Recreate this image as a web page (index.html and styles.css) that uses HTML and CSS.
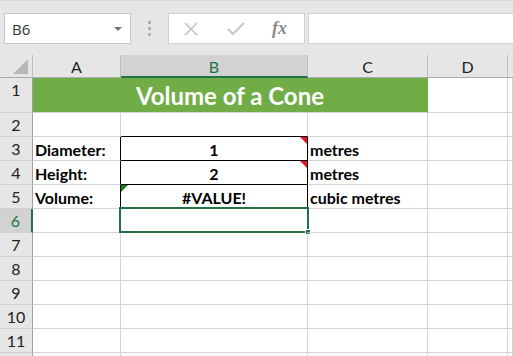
FILE: index.html
```html
<!DOCTYPE html>
<html lang="en">
<head>
    <meta charset="UTF-8">
    <title>Volume of a Cone</title>
    <link rel="stylesheet" href="styles.css">
</head>
<body>

    <!-- Formula bar -->
    <div class="toolbar">
        <div class="name-box">
            <span>B6</span>
            <span class="drop"></span>
        </div>
        <div class="dots"><i></i><i></i><i></i></div>
        <div class="fx-box">
            <svg width="14" height="14" viewBox="0 0 14 14"><path d="M1 1 L13 13 M13 1 L1 13" stroke="#c3c3c3" stroke-width="1.6" fill="none"/></svg>
            <svg width="18" height="14" viewBox="0 0 18 14"><path d="M1 7 L6 12 L17 1" stroke="#c3c3c3" stroke-width="1.8" fill="none"/></svg>
            <span class="fx">fx</span>
        </div>
        <div class="formula"></div>
    </div>

    <!-- Sheet -->
    <div class="sheet">
        <div class="corner"><span class="corner-tri"></span></div>
        <div class="col-head">A</div>
        <div class="col-head active">B</div>
        <div class="col-head">C</div>
        <div class="col-head">D</div>
        <div class="col-head last"></div>

        <div class="row-head">1</div>
        <div class="cell title">Volume of a Cone</div>
        <div class="cell"></div>
        <div class="cell"></div>

        <div class="row-head">2</div>
        <div class="cell"></div>
        <div class="cell above-box"></div>
        <div class="cell"></div>
        <div class="cell"></div>
        <div class="cell"></div>

        <div class="row-head">3</div>
        <div class="cell label left-of-box">Diameter:</div>
        <div class="cell boxed num">1<span class="flag-red"></span></div>
        <div class="cell label">metres</div>
        <div class="cell"></div>
        <div class="cell"></div>

        <div class="row-head">4</div>
        <div class="cell label left-of-box">Height:</div>
        <div class="cell boxed num">2<span class="flag-red"></span></div>
        <div class="cell label">metres</div>
        <div class="cell"></div>
        <div class="cell"></div>

        <div class="row-head">5</div>
        <div class="cell label left-of-box">Volume:</div>
        <div class="cell boxed num">#VALUE!<span class="flag-green"></span></div>
        <div class="cell label">cubic metres</div>
        <div class="cell"></div>
        <div class="cell"></div>

        <div class="row-head active">6</div>
        <div class="cell"></div>
        <div class="cell selected"><span class="sel"><span class="handle"></span></span></div>
        <div class="cell"></div>
        <div class="cell"></div>
        <div class="cell"></div>

        <div class="row-head">7</div>
        <div class="cell"></div><div class="cell"></div><div class="cell"></div><div class="cell"></div><div class="cell"></div>
        <div class="row-head">8</div>
        <div class="cell"></div><div class="cell"></div><div class="cell"></div><div class="cell"></div><div class="cell"></div>
        <div class="row-head">9</div>
        <div class="cell"></div><div class="cell"></div><div class="cell"></div><div class="cell"></div><div class="cell"></div>
        <div class="row-head">10</div>
        <div class="cell"></div><div class="cell"></div><div class="cell"></div><div class="cell"></div><div class="cell"></div>
        <div class="row-head">11</div>
        <div class="cell"></div><div class="cell"></div><div class="cell"></div><div class="cell"></div><div class="cell"></div>
        <div class="row-head"></div>
        <div class="cell"></div><div class="cell"></div><div class="cell"></div><div class="cell"></div><div class="cell"></div>
    </div>

</body>
</html>
```

FILE: styles.css
```css
* {
    box-sizing: border-box;
}
body {
    margin: 0;
    width: 513px;
    height: 356px;
    overflow: hidden;
    background-color: #fff;
    font-family: Lato, "Liberation Sans", sans-serif;
}

/* formula bar */
.toolbar {
    height: 55px;
    background-color: #e6e6e6;
    border-top: 1px solid #d6d6d6;
    display: flex;
    align-items: flex-start;
    padding: 12px 0 0 4px;
}
.name-box {
    width: 127px;
    height: 31px;
    background-color: #fff;
    border: 1px solid #c6c6c6;
    display: flex;
    align-items: center;
    justify-content: space-between;
    padding: 0 8px 0 7px;
    font-family: "Open Sans", sans-serif;
    font-size: 15px;
    color: #333;
}
.drop {
    width: 0;
    height: 0;
    border-left: 4px solid transparent;
    border-right: 4px solid transparent;
    border-top: 4px solid #777;
}
.dots {
    width: 37px;
    height: 31px;
    display: flex;
    flex-direction: column;
    align-items: center;
    justify-content: center;
    gap: 3px;
}
.dots i {
    width: 3px;
    height: 3px;
    background-color: #b3b3b3;
}
.fx-box {
    width: 137px;
    height: 31px;
    background-color: #fff;
    border: 1px solid #d0d0d0;
    display: flex;
    align-items: center;
    padding-left: 15px;
    gap: 29px;
}
.fx {
    font-family: "Liberation Serif", serif;
    font-style: italic;
    font-weight: bold;
    font-size: 18px;
    color: #8a8a8a;
    margin-left: -2px;
}
.formula {
    flex: 1;
    height: 31px;
    margin-left: 3px;
    background-color: #fff;
    border: 1px solid #d0d0d0;
    border-right: none;
}

/* grid */
.sheet {
    display: grid;
    grid-template-columns: 33px 88px 187px 120px 80px 1fr;
    grid-template-rows: 23px 35px repeat(11, 24px);
}
.corner {
    position: relative;
    background-color: #e6e6e6;
    border-right: 1px solid #bdbdbd;
    border-bottom: 1px solid #ababab;
}
.corner-tri {
    position: absolute;
    right: 4px;
    bottom: 3px;
    width: 0;
    height: 0;
    border-left: 15px solid transparent;
    border-bottom: 15px solid #b7b7b7;
}
.col-head {
    background-color: #e6e6e6;
    border-right: 1px solid #bdbdbd;
    border-bottom: 1px solid #ababab;
    text-align: center;
    font-size: 16px;
    line-height: 23px;
    color: #222;
}
.col-head.active {
    background-color: #d2d2d2;
    border-bottom: 2px solid #217346;
    color: #217346;
}
.col-head.last {
    border-right: none;
}
.row-head {
    background-color: #e6e6e6;
    border-right: 1px solid #9f9f9f;
    border-bottom: 1px solid #d0d0d0;
    text-align: center;
    font-size: 16px;
    line-height: 24px;
    color: #222;
}
.row-head.active {
    background-color: #d2d2d2;
    border-right: 2px solid #217346;
    color: #217346;
}
.cell {
    position: relative;
    border-right: 1px solid #d4d4d4;
    border-bottom: 1px solid #d4d4d4;
    font-size: 16px;
    line-height: 25px;
    white-space: nowrap;
}
.title {
    grid-column: 2 / 5;
    background-color: #70ad47;
    color: #fff;
    font-weight: bold;
    font-size: 24px;
    line-height: 35px;
    text-align: center;
    border-right: 1px solid #70ad47;
    border-bottom: 1px solid #d4d4d4;
}
.label {
    font-weight: bold;
    padding-left: 2px;
    color: #000;
}
.num {
    font-weight: bold;
    text-align: center;
}
.above-box {
    border-bottom-color: #000;
}
.left-of-box {
    border-right-color: #000;
}
.boxed {
    border-right-color: #000;
    border-bottom-color: #000;
}
.flag-red {
    position: absolute;
    top: 0;
    right: 0;
    border-left: 7px solid transparent;
    border-top: 7px solid #e81123;
}
.flag-green {
    position: absolute;
    top: 0;
    left: 0;
    border-right: 7px solid transparent;
    border-top: 7px solid #1e7b1e;
}
.sel {
    position: absolute;
    top: -2px;
    left: -2px;
    right: -2px;
    bottom: -1px;
    border: 2px solid #217346;
}
.handle {
    position: absolute;
    right: -4px;
    bottom: -4px;
    width: 6px;
    height: 6px;
    background-color: #217346;
    border: 1px solid #fff;
}
```
